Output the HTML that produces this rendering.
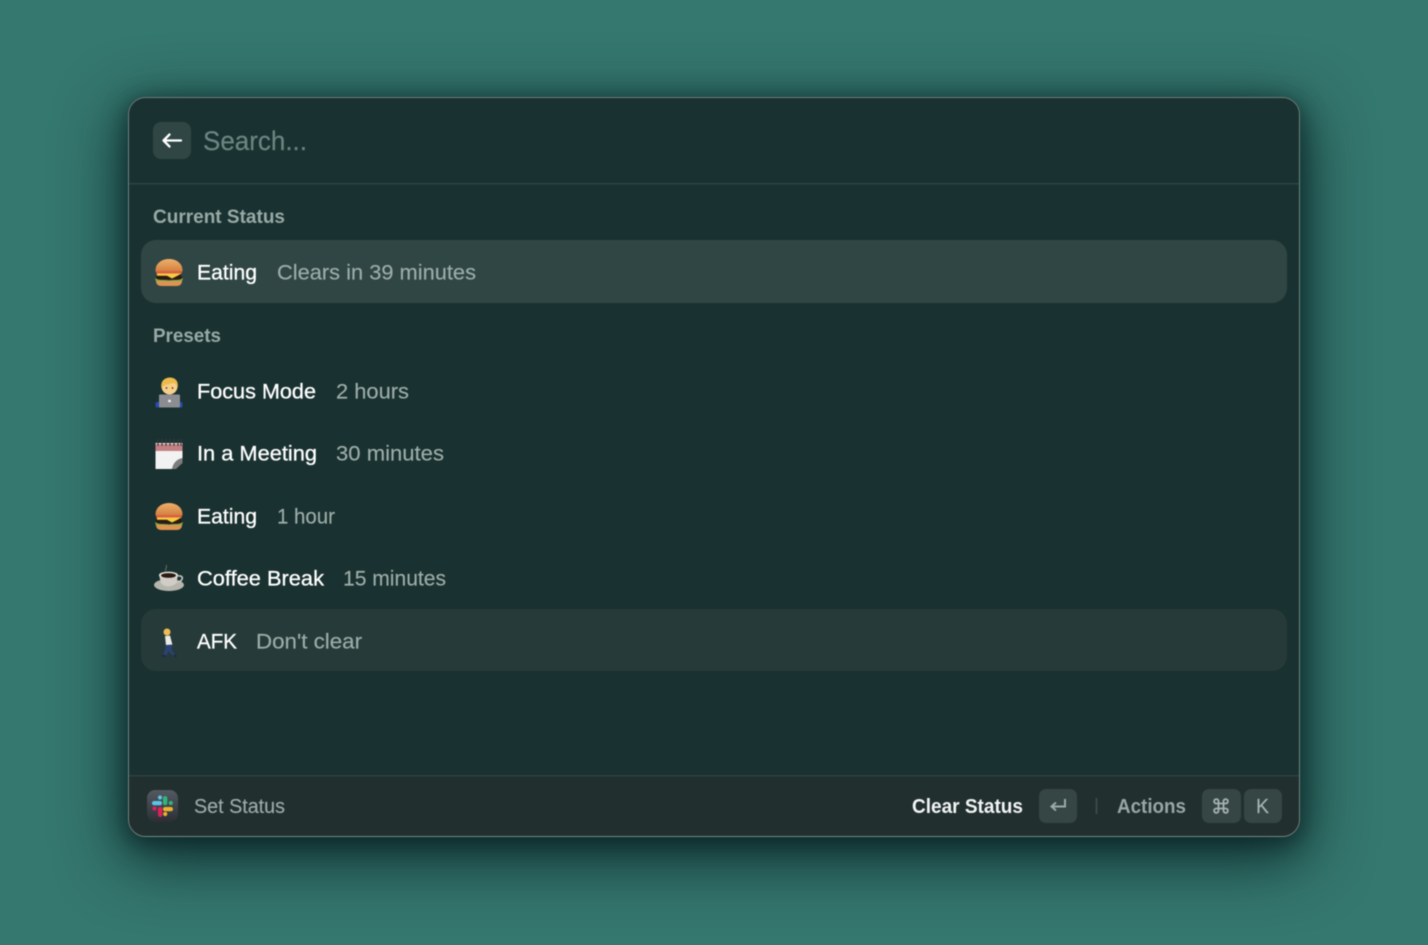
<!DOCTYPE html>
<html><head><meta charset="utf-8"><style>
html,body{margin:0;padding:0;width:1428px;height:945px;overflow:hidden;background:#35786f}
#shadow{position:absolute;left:128px;top:97px;width:1172px;height:740px;border-radius:18px;box-shadow:0 18px 62px 8px rgba(8,30,32,.78),0 5px 22px 2px rgba(8,30,32,.6)}
svg{display:block;position:absolute;left:0;top:0}
text{font-family:"Liberation Sans",sans-serif}
.t{fill:#fff;font-size:21.500px;stroke:#fff;stroke-width:.3}
.s{fill:#9dada9;font-size:21.500px;stroke:#9dada9;stroke-width:.15}
.h{fill:#98aaa7;font-size:19.500px;font-weight:700}
</style></head><body>
<div id="shadow"></div>
<svg width="1428" height="945" viewBox="0 0 1428 945" xmlns="http://www.w3.org/2000/svg">
<defs>
<filter id="b" x="-5%" y="-5%" width="110%" height="110%" color-interpolation-filters="sRGB"><feGaussianBlur stdDeviation="0.4"/></filter>
<clipPath id="win"><rect x="128" y="97" width="1172" height="740" rx="17"/></clipPath>
<linearGradient id="bun" x1="0" y1="0" x2="0" y2="1"><stop offset="0" stop-color="#efb06b"/><stop offset="1" stop-color="#cf7c3c"/></linearGradient>
<linearGradient id="sl" x1="0" y1="0" x2="0" y2="1"><stop offset="0" stop-color="#545a62"/><stop offset="1" stop-color="#2b2e35"/></linearGradient>
<g id="burger">
<path d="M-13.500 -1.500C-13.500 -9 -7 -13 0 -13C7 -13 13.500 -9 13.500 -1.500C13.500 0 12.500 .5 11 .5H-11C-12.500 .5 -13.500 0 -13.500 -1.500Z" fill="url(#bun)"/>
<path d="M-13 -1H13L12.500 2H-12.500Z" fill="#dc5f42"/>
<rect x="-13" y="3" width="26" height="4.500" rx="2.200" fill="#2f1a12"/>
<path d="M-12 1.500H12L9 3.500L3 6.500L-2 3.800H-12Z" fill="#f6cc3f"/>
<path d="M-14 6C-10 9 -5 7.500 0 8.500C5 7.500 10 9 14 6L13 9.500H-13Z" fill="#7fb246"/>
<path d="M-13 9H13C13 12 11 14 7.500 14H-7.500C-11 14 -13 12 -13 9Z" fill="#de9350"/>
</g>
</defs>
<g filter="url(#b)">
<g clip-path="url(#win)">
<rect x="128" y="97" width="1172" height="740" fill="#193130"/>
<rect x="128" y="183" width="1172" height="1.500" fill="#2b4544"/>
<rect x="141" y="240" width="1146" height="63" rx="15" fill="#2f4644"/>
<rect x="141" y="609" width="1146" height="62" rx="15" fill="#263b39"/>
<rect x="128" y="775" width="1172" height="62" fill="#212f2e"/>
<rect x="128" y="775" width="1172" height="1.500" fill="#2e4140"/>
</g>
<rect x="128.500" y="97.500" width="1171" height="739" rx="17" fill="none" stroke="#5d6f6e" stroke-width="1.200"/>

<rect x="153" y="122" width="38" height="37" rx="8" fill="#2f4644"/>
<path d="M181 140.500H163.500M169.500 134.500L163.500 140.500L169.500 146.500" fill="none" stroke="#fff" stroke-width="2.300" stroke-linecap="round" stroke-linejoin="round"/>
<text x="203" y="150" font-size="26.500" fill="#6b8581" stroke="#6b8581" stroke-width=".2" textLength="104" lengthAdjust="spacingAndGlyphs">Search...</text>

<text class="h" x="153" y="223" textLength="132" lengthAdjust="spacingAndGlyphs">Current Status</text>
<text class="h" x="153" y="342" textLength="68" lengthAdjust="spacingAndGlyphs">Presets</text>

<use href="#burger" x="169" y="272"/>
<text class="t" x="197" y="279.500" textLength="60" lengthAdjust="spacingAndGlyphs">Eating</text>
<text class="s" x="277" y="279.500" textLength="199" lengthAdjust="spacingAndGlyphs">Clears in 39 minutes</text>

<!-- technologist -->
<g>
<rect x="155.500" y="402" width="7" height="5.500" rx="1.500" fill="#2a49b0"/>
<rect x="175.500" y="402" width="7" height="5.500" rx="1.500" fill="#2a49b0"/>
<ellipse cx="169.500" cy="386.500" rx="8" ry="8" fill="#f6cf8a"/>
<path d="M161.500 388C160 381 165 377.500 170 377.500C175 377.500 179 381 177.500 388C176.500 384.500 175 383 173 383C170 384.500 164 384 161.500 388Z" fill="#edbb4c"/>
<circle cx="166.500" cy="388" r=".9" fill="#5b3a20"/><circle cx="172.500" cy="388" r=".9" fill="#5b3a20"/>
<rect x="159" y="394.500" width="21" height="13" rx="1" fill="#8b8d92"/>
<circle cx="169.500" cy="401" r="1.400" fill="#f0f0f0"/>
</g>
<text class="t" x="197" y="398.500" textLength="119" lengthAdjust="spacingAndGlyphs">Focus Mode</text>
<text class="s" x="336" y="398.500" textLength="73" lengthAdjust="spacingAndGlyphs">2 hours</text>

<!-- calendar -->
<g>
<path d="M155.500 443H182.500V459L172 469H155.500Z" fill="#f2f2f2"/>
<rect x="155.500" y="444" width="27" height="7" fill="#c38083"/>
<path d="M158 439V446M162 439V446M166 439V446M170 439V446M174 439V446M178 439V446M181 439V446" stroke="#3a3a3a" stroke-width="1.100"/>
<path d="M172 469C173 463 177 459 182.500 458L182.500 463L176 469Z" fill="#7c7c7c"/>
</g>
<text class="t" x="197" y="460.500" textLength="120" lengthAdjust="spacingAndGlyphs">In a Meeting</text>
<text class="s" x="336" y="460.500" textLength="108" lengthAdjust="spacingAndGlyphs">30 minutes</text>

<use href="#burger" x="169" y="516"/>
<text class="t" x="197" y="523.500" textLength="60" lengthAdjust="spacingAndGlyphs">Eating</text>
<text class="s" x="277" y="523.500" textLength="58" lengthAdjust="spacingAndGlyphs">1 hour</text>

<!-- coffee -->
<g>
<ellipse cx="169" cy="585" rx="15" ry="6" fill="#b5b5ad"/>
<path d="M159 575H178L176.500 583C172 587.500 164 587.500 161 583Z" fill="#cfcdc6"/>
<ellipse cx="168.500" cy="575" rx="9.500" ry="3.400" fill="#e6e4dd"/>
<ellipse cx="168.500" cy="575.500" rx="7.500" ry="2.400" fill="#2b1a12"/>
<path d="M178 576C184 575 184 581 176.500 582.500" fill="none" stroke="#c9c7c0" stroke-width="1.600"/>
<path d="M166 571C164 569 168 568 166 565" fill="none" stroke="#5e716f" stroke-width="1"/>
</g>
<text class="t" x="197" y="585.500" textLength="127" lengthAdjust="spacingAndGlyphs">Coffee Break</text>
<text class="s" x="343" y="585.500" textLength="103" lengthAdjust="spacingAndGlyphs">15 minutes</text>

<!-- walking person -->
<g>
<circle cx="167" cy="632" r="3.500" fill="#eebb55"/>
<path d="M165 636L170 635.500L172.500 645L166 645.500Z" fill="#ebeae4"/>
<path d="M166 645L172.500 644.500L171.500 650L175.500 655L173.500 656L168.500 651L166 656L163.500 655.500Z" fill="#2a4278"/>
<path d="M162 655H166V656.800H162ZM173.500 654.500H176.500V657.500H175Z" fill="#1e2a44"/>
</g>
<text class="t" x="197" y="648.500" textLength="40" lengthAdjust="spacingAndGlyphs">AFK</text>
<text class="s" x="256" y="648.500" textLength="106" lengthAdjust="spacingAndGlyphs">Don't clear</text>

<!-- slack -->
<rect x="147" y="790" width="31" height="32" rx="8" fill="url(#sl)"/>
<rect x="152" y="801" width="10" height="4.300" rx="2.100" fill="#5cc3e8"/>
<circle cx="160" cy="797.500" r="2.100" fill="#5cc3e8"/>
<rect x="163" y="796" width="4.300" height="9.300" rx="2.100" fill="#2eb67d"/>
<circle cx="170.800" cy="803" r="2.100" fill="#2eb67d"/>
<rect x="158" y="807" width="4.300" height="10" rx="2.100" fill="#e01e5a"/>
<circle cx="154.500" cy="808.500" r="2.100" fill="#e01e5a"/>
<rect x="163" y="807" width="10" height="4.300" rx="2.100" fill="#ecb22e"/>
<circle cx="165.200" cy="814" r="2.100" fill="#ecb22e"/>
<text x="194" y="813" font-size="20.500" fill="#9dabA9" stroke="#9dabA9" stroke-width=".15" textLength="91" lengthAdjust="spacingAndGlyphs">Set Status</text>

<text x="912" y="813" font-size="20.500" font-weight="700" fill="#f2f4f4" textLength="111" lengthAdjust="spacingAndGlyphs">Clear Status</text>
<rect x="1039" y="789" width="38" height="34" rx="7" fill="#354644"/>
<path d="M1065 799V806.500H1051.500M1056 802.500L1051.500 806.500L1056 810.500" fill="none" stroke="#9aaaa7" stroke-width="2"/>
<rect x="1095.500" y="798" width="2" height="16" fill="#374a49"/>
<text x="1117" y="813" font-size="20.500" font-weight="700" fill="#98a7a4" textLength="69" lengthAdjust="spacingAndGlyphs">Actions</text>
<rect x="1202" y="789" width="39" height="34" rx="7" fill="#354644"/>
<g fill="none" stroke="#a5b3b0" stroke-width="1.800">
<path d="M1218.500 803.500H1223.500V808.500H1218.500ZM1218.500 803.500V801.500A2.200 2.200 0 1 0 1216.300 803.500H1218.500M1223.500 803.500H1225.700A2.200 2.200 0 1 0 1223.500 801.500V803.500M1223.500 808.500V810.500A2.200 2.200 0 1 0 1225.700 808.500H1223.500M1218.500 808.500H1216.300A2.200 2.200 0 1 0 1218.500 810.500V808.500"/>
</g>
<rect x="1244" y="789" width="38" height="34" rx="7" fill="#354644"/>
<text x="1256" y="813" font-size="20.500" fill="#a5b3b0" stroke="#a5b3b0" stroke-width=".2" textLength="13" lengthAdjust="spacingAndGlyphs">K</text>
</g>
</svg>
</body></html>
